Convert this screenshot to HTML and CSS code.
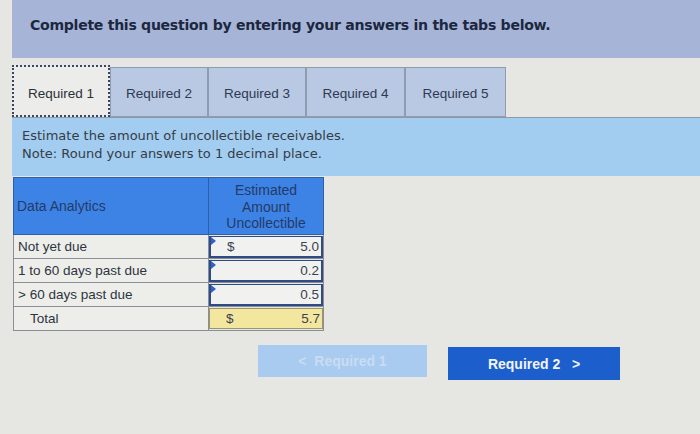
FILE: index.html
```html
<!DOCTYPE html>
<html>
<head>
<meta charset="utf-8">
<link rel="stylesheet" href="styles.css">
</head>
<body>
<div class="wrap">
  <div class="header">
    <div class="title">Complete this question by entering your answers in the tabs below.</div>
  </div>
  <div class="tabs">
    <div class="tab active">Required 1</div>
    <div class="tab">Required 2</div>
    <div class="tab">Required 3</div>
    <div class="tab">Required 4</div>
    <div class="tab">Required 5</div>
  </div>
  <div class="instr">
    <div>Estimate the amount of uncollectible receivables.</div>
    <div>Note: Round your answers to 1 decimal place.</div>
  </div>
  <table class="grid">
    <tr class="head">
      <th class="c1">Data Analytics</th>
      <th class="c2">Estimated<br>Amount<br>Uncollectible</th>
    </tr>
    <tr>
      <td class="lbl">Not yet due</td>
      <td class="val"><div class="box"><span class="mark"></span><span class="cur">$</span><span class="num">5.0</span></div></td>
    </tr>
    <tr>
      <td class="lbl">1 to 60 days past due</td>
      <td class="val"><div class="box"><span class="mark"></span><span class="cur"></span><span class="num">0.2</span></div></td>
    </tr>
    <tr>
      <td class="lbl">&gt; 60 days past due</td>
      <td class="val"><div class="box"><span class="mark"></span><span class="cur"></span><span class="num">0.5</span></div></td>
    </tr>
    <tr>
      <td class="lbl total">Total</td>
      <td class="val"><div class="box tot"><span class="cur">$</span><span class="num">5.7</span></div></td>
    </tr>
  </table>
  <div class="nav">
    <div class="btn prev">&lt;&nbsp; Required 1</div>
    <div class="btn next">Required 2 &nbsp;&nbsp;<span class="chev">&gt;</span></div>
  </div>
</div>
</body>
</html>
```
FILE: styles.css
```css
html, body {
  margin: 0;
  padding: 0;
  background: #e6e7e3;
  font-family: "Liberation Sans", Arial, sans-serif;
}
.wrap {
  padding-left: 12px;
  width: 688px;
}
.header {
  height: 58px;
  background: #a6b5d7;
  display: flex;
  align-items: center;
  padding-left: 18px;
  padding-bottom: 14px;
  box-sizing: border-box;
}
.title {
  font-family: "DejaVu Sans", Verdana, sans-serif;
  font-weight: bold;
  font-size: 14.1px;
  color: #1c2740;
  letter-spacing: -0.3px;
  padding-top: 6px;
}
.tabs {
  display: flex;
  margin-top: 8px;
  height: 52px;
  border-bottom: 1px solid #8e98a6;
  box-sizing: border-box;
  padding-top: 1px;
}
.tab {
  width: 98px;
  height: 50px;
  box-sizing: border-box;
  border: 1px solid #8f9bb0;
  background: #b9c8e3;
  color: #2d3a52;
  font-size: 13.5px;
  display: flex;
  align-items: center;
  justify-content: center;
  padding-top: 2px;
}
.tab:nth-child(4) { width: 99px; }
.tab:nth-child(5) { width: 101px; }
.tab.active {
  background: #ecedea;
  border: 2px dotted #3a4660;
  color: #2b2f38;
  height: 52px;
  margin-top: -2px;
  padding-top: 4px;
}
.instr {
  background: #a2cdf0;
  height: 58px;
  box-sizing: border-box;
  padding: 9px 10px 0 10px;
  font-family: "DejaVu Sans", Verdana, sans-serif;
  font-size: 13px;
  line-height: 18px;
  color: #353c47;
}
.grid {
  border-collapse: collapse;
  margin-left: 1px;
  margin-top: 1px;
  font-size: 13.5px;
  color: #2d3440;
}
.grid th {
  background: #3d83e6;
  color: #253a66;
  font-weight: normal;
  height: 54px;
  padding: 0;
  border: 1px solid #2f5fa8;
  font-size: 14px;
}
.grid th.c1 {
  width: 195px;
  text-align: left;
  padding-left: 3px;
  box-sizing: border-box;
}
.grid th.c2 {
  width: 114px;
  text-align: center;
  line-height: 16.5px;
  padding-top: 2px;
}
.grid td {
  padding: 0;
  height: 23px;
}
.grid td.lbl {
  background: #edeeea;
  border: 1px solid #8b8f95;
  padding-left: 4px;
}
.grid td.lbl.total {
  padding-left: 16px;
  height: 21px;
}
.grid td.val {
  border: 1px solid #8b8f95;
}
.box {
  position: relative;
  height: 22px;
  border: 2px solid #2e4b86;
  border-top-width: 1px;
  background: #f1f2f0;
  display: flex;
  align-items: center;
  box-sizing: border-box;
  padding: 0 2px 0 16px;
  color: #3a4150;
}
.box.tot {
  background: #f3e7a0;
  border: 1px solid #9a9470;
  height: 21px;
}
.mark {
  position: absolute;
  left: 0;
  top: 0;
  width: 0;
  height: 0;
  border-top: 4px solid transparent;
  border-bottom: 4px solid transparent;
  border-left: 5px solid #2e62c8;
}
.cur {
  flex: 1;
}
.num {
  text-align: right;
}
.nav {
  display: flex;
  margin-top: 14px;
  padding-left: 246px;
}
.btn {
  font-family: "Liberation Sans", Arial, sans-serif;
  font-weight: bold;
  font-size: 14px;
  display: flex;
  align-items: center;
  justify-content: center;
  box-sizing: border-box;
}
.btn.prev {
  width: 169px;
  height: 32px;
  background: #a8cbef;
  color: #c9dcf2;
}
.btn.next {
  width: 172px;
  height: 33px;
  margin-left: 21px;
  margin-top: 2px;
  background: #1d5ecd;
  color: #f2f5fb;
}
```
